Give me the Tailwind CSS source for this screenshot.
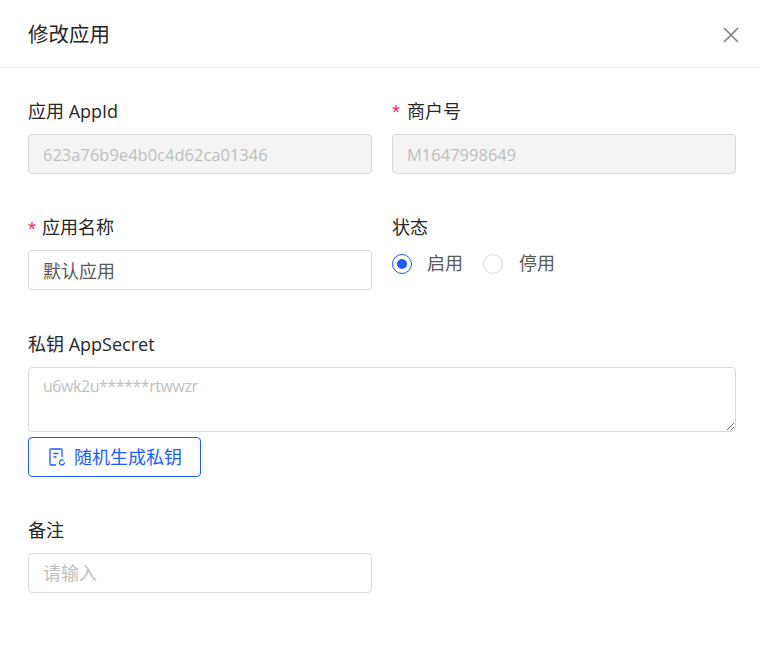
<!DOCTYPE html>
<html lang="zh-CN">
<head>
  <meta charset="utf-8">
  <meta name="viewport" content="width=device-width, initial-scale=1">
  <title>修改应用</title>
  <script src="https://cdn.jsdelivr.net/npm/@tailwindcss/browser@4"></script>
</head>
<body class="bg-white text-[18px] text-[#262626] font-['Open_Sans','Noto_Sans_CJK_SC',sans-serif]">
  <header class="h-[68px] flex items-center justify-between pl-[28px] pr-[20px] pt-[2px] border-b border-[#e8e8e8]">
    <h1 class="text-[20.5px] font-normal">修改应用</h1>
    <svg class="w-[18px] h-[18px] text-[#808080]" viewBox="0 0 18 18" fill="none" stroke="currentColor" stroke-width="1.6"><path d="M2 2l14 14M16 2L2 16"/></svg>
  </header>

  <form class="pl-[28px] pr-[24px] pt-[31px]">
    <div class="grid grid-cols-2 gap-x-[20px] gap-y-[42px]">
      <div>
        <label class="block h-[24px] leading-[24px] mb-[11px]">应用 AppId</label>
        <input disabled value="623a76b9e4b0c4d62ca01346" class="block w-full h-[40px] px-[14px] border border-[#d9d9d9] rounded-[4px] bg-[#f4f4f4] text-[16.5px] text-[#bfbfbf]">
      </div>
      <div>
        <label class="flex items-center h-[24px] leading-[24px] mb-[11px]"><span class="w-[17px] -ml-[2px] text-[20px] pt-[8px] font-['Liberation_Mono'] text-[#ff2a5a]">*</span>商户号</label>
        <input disabled value="M1647998649" class="block w-full h-[40px] px-[14px] border border-[#d9d9d9] rounded-[4px] bg-[#f4f4f4] text-[16.5px] text-[#bfbfbf]">
      </div>
      <div>
        <label class="flex items-center h-[24px] leading-[22px] mb-[10px]"><span class="w-[16px] -ml-[2px] text-[20px] pt-[8px] font-['Liberation_Mono'] text-[#ff2a5a]">*</span><span class="-mt-[2px]">应用名称</span></label>
        <input value="默认应用" class="block w-full h-[40px] px-[14px] border border-[#d9d9d9] rounded-[4px] text-[#595959]">
      </div>
      <div>
        <label class="block h-[24px] leading-[22px] mb-[10px]">状态</label>
        <div class="flex items-center h-[28px] text-[#595959]">
          <span class="w-[20px] h-[20px] rounded-full border border-[#2156f5] flex items-center justify-center"><span class="w-[10px] h-[10px] rounded-full bg-[#1d5cff]"></span></span>
          <span class="ml-[15px] -mt-[2px]">启用</span>
          <span class="w-[20px] h-[20px] rounded-full border border-[#d9d9d9] ml-[20px]"></span>
          <span class="ml-[16px] -mt-[2px]">停用</span>
        </div>
      </div>
    </div>

    <div class="mt-[42px]">
      <label class="block h-[24px] leading-[24px] mb-[11px]">私钥 AppSecret</label>
      <textarea class="block w-full h-[65px] px-[14px] py-[6px] border border-[#d9d9d9] rounded-[4px] text-[16px] tracking-[-0.45px] placeholder:text-[#bfbfbf]" placeholder="u6wk2u******rtwwzr"></textarea>
      <button type="button" class="mt-[5px] h-[40px] w-[173px] flex items-center justify-center gap-[7px] border border-[#1d5cff] rounded-[4px] text-[#1d5cff]">
        <svg class="w-[20px] h-[20px]" viewBox="0 0 20 20" fill="none" stroke="currentColor" stroke-width="1.3"><path d="M9 18H4a1 1 0 0 1-1-1V3a1 1 0 0 1 1-1h10a1 1 0 0 1 1 1v7M6.500 6.500h5M6.500 10h3"/><path d="M17.500 15.500a2.500 2.500 0 1 1-.9-2"/></svg>
        随机生成私钥
      </button>
    </div>

    <div class="mt-[42px] w-[344px]">
      <label class="block h-[24px] leading-[22px] mb-[10px]">备注</label>
      <input placeholder="请输入" class="block w-full h-[40px] px-[14px] border border-[#d9d9d9] rounded-[4px] placeholder:text-[#bfbfbf]">
    </div>
  </form>
</body>
</html>
